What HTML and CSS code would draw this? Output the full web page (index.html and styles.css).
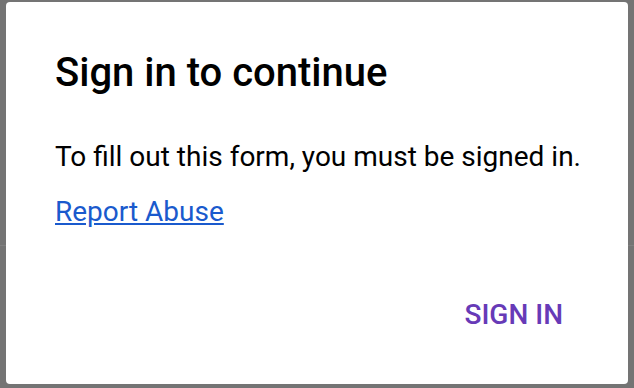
FILE: index.html
```html
<!DOCTYPE html>
<html lang="en">
<head>
  <meta charset="UTF-8" />
  <meta name="viewport" content="width=device-width, initial-scale=1.0"/>
  <title>Sign in to continue</title>
  <link rel="stylesheet" href="styles.css">
</head>
<body>
  <div class="backdrop">
    <div class="page-line"></div>
  </div>

  <!-- Sign in dialog -->
  <div class="dialog" role="dialog">
    <h2 class="dialog-title">Sign in to continue</h2>
    <p class="dialog-text">To fill out this form, you must be signed in.</p>
    <a class="report-link" href="#">Report Abuse</a>
    <div class="dialog-actions">
      <button class="sign-in-btn">Sign in</button>
    </div>
  </div>
</body>
</html>
```

FILE: styles.css
```css
body {
  font-family: Roboto, Arial, sans-serif;
  background-color: #747474;
  margin: 0;
  width: 634px;
  height: 388px;
  overflow: hidden;
  position: relative;
}

.backdrop {
  position: absolute;
  top: 0;
  left: 0;
  width: 100%;
  height: 100%;
}

.page-line {
  margin-top: 245px;
  height: 1px;
  background-color: #808080;
}

.dialog {
  position: absolute;
  top: 2px;
  left: 6px;
  width: 622px;
  height: 382px;
  box-sizing: border-box;
  background-color: #fff;
  border-radius: 4px;
  padding: 0 40px 0 49px;
  display: flex;
  flex-direction: column;
}

.dialog-title {
  margin: 47px 0 0;
  font-size: 40px;
  font-weight: 500;
  line-height: 48px;
  color: #000;
}

.dialog-text {
  margin: 42px 0 0;
  font-size: 28px;
  line-height: 36px;
  white-space: nowrap;
  color: #000;
}

.report-link {
  margin-top: 19px;
  align-self: flex-start;
  font-size: 28px;
  line-height: 36px;
  color: #1a5acd;
}

.dialog-actions {
  margin-top: auto;
  padding-bottom: 51px;
  display: flex;
  justify-content: flex-end;
}

.sign-in-btn {
  background: none;
  border: none;
  padding: 0 25px 0 16px;
  font-family: inherit;
  font-size: 28px;
  font-weight: 500;
  line-height: 36px;
  text-transform: uppercase;
  color: #673ab7;
  cursor: pointer;
}
```
